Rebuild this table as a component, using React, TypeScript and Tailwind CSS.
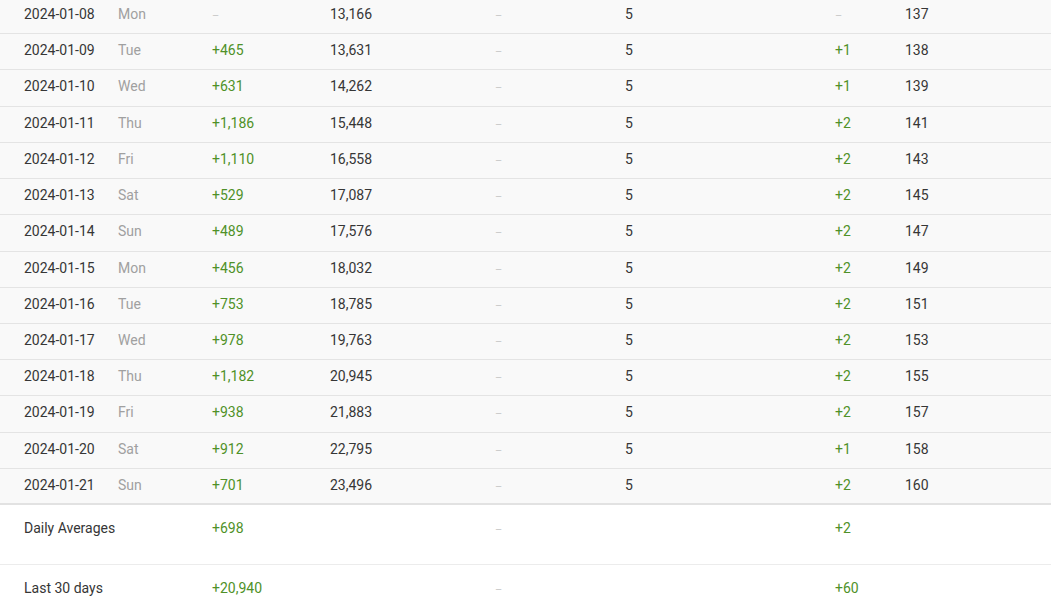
import React from "react";

const rows: [string, string, string, string, string, string][] = [
  ["2024-01-08", "Mon", "", "13,166", "", "137"],
  ["2024-01-09", "Tue", "+465", "13,631", "+1", "138"],
  ["2024-01-10", "Wed", "+631", "14,262", "+1", "139"],
  ["2024-01-11", "Thu", "+1,186", "15,448", "+2", "141"],
  ["2024-01-12", "Fri", "+1,110", "16,558", "+2", "143"],
  ["2024-01-13", "Sat", "+529", "17,087", "+2", "145"],
  ["2024-01-14", "Sun", "+489", "17,576", "+2", "147"],
  ["2024-01-15", "Mon", "+456", "18,032", "+2", "149"],
  ["2024-01-16", "Tue", "+753", "18,785", "+2", "151"],
  ["2024-01-17", "Wed", "+978", "19,763", "+2", "153"],
  ["2024-01-18", "Thu", "+1,182", "20,945", "+2", "155"],
  ["2024-01-19", "Fri", "+938", "21,883", "+2", "157"],
  ["2024-01-20", "Sat", "+912", "22,795", "+1", "158"],
  ["2024-01-21", "Sun", "+701", "23,496", "+2", "160"],
];

const grid = "grid grid-cols-[94px_94px_118px_165px_130px_210px_70px_1fr] pl-[24px]";
const Dash = () => <span className="text-[#c8c8c8] text-[11px]">–</span>;

export default function App() {
  return (
    <div
      className="w-[1051px] h-[615px] overflow-hidden bg-white text-[14px] leading-[20px] text-[#363636]"
      style={{ fontFamily: "Roboto, 'Noto Sans', sans-serif" }}
    >
      <div className="-mt-[2px]">
        {rows.map((r, i) => (
          <div
            key={r[0]}
            className={`${grid} h-[36.23px] pt-[6px] bg-[#f9f9f9] ${
              i === rows.length - 1 ? "border-b-2 border-[#e2e2e2]" : "border-b border-[#e4e4e4]"
            }`}
          >
            <div>{r[0]}</div>
            <div className="text-[#a0a0a0]">{r[1]}</div>
            <div className="text-[#4f9128]">{r[2] || <Dash />}</div>
            <div>{r[3]}</div>
            <div><Dash /></div>
            <div>5</div>
            <div className="text-[#4f9128]">{r[4] || <Dash />}</div>
            <div>{r[5]}</div>
          </div>
        ))}
      </div>
      <div className={`${grid} h-[60px] pt-[13px] border-b border-[#ececec]`}>
        <div className="col-span-2">Daily Averages</div>
        <div className="text-[#4f9128]">+698</div>
        <div></div>
        <div><Dash /></div>
        <div></div>
        <div className="text-[#4f9128]">+2</div>
        <div></div>
      </div>
      <div className={`${grid} h-[50px] pt-[13px]`}>
        <div className="col-span-2">Last 30 days</div>
        <div className="text-[#4f9128]">+20,940</div>
        <div></div>
        <div><Dash /></div>
        <div></div>
        <div className="text-[#4f9128]">+60</div>
        <div></div>
      </div>
    </div>
  );
}
